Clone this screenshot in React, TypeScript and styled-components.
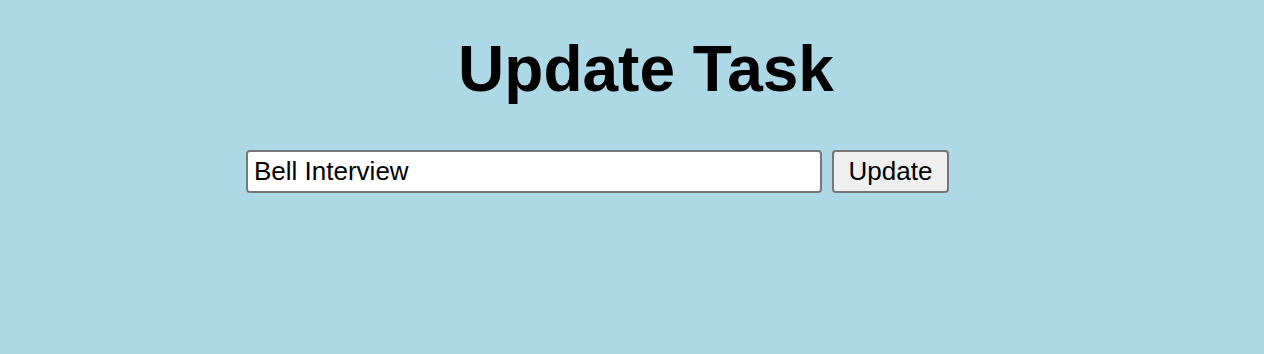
import { createGlobalStyle } from "styled-components";
import styled from "styled-components";

const GlobalStyle = createGlobalStyle`
  html, body {
    margin: 0;
    padding: 0;
    background-color: lightblue;
    font-family: "Liberation Sans", Arial, Helvetica, sans-serif;
  }
`;

const Page = styled.div`
  display: flex;
  flex-direction: column;
  min-height: 354px;
  background-color: lightblue;
`;

const Title = styled.h1`
  margin: 32px 0 0 0;
  padding-left: 28px;
  text-align: center;
  font-size: 64px;
  font-weight: 700;
  line-height: 74px;
  color: #000;
`;

const Form = styled.form`
  display: flex;
  align-items: flex-start;
  gap: 10px;
  margin: 44px 0 0 246px;
`;

const TaskInput = styled.input`
  box-sizing: border-box;
  width: 576px;
  height: 43px;
  padding: 1px 6px;
  border: 2px solid #767676;
  border-radius: 4px;
  background: #fff;
  font-family: "Liberation Sans", Arial, sans-serif;
  font-size: 26px;
  color: #000;
  outline: none;
`;

const SubmitButton = styled.button`
  box-sizing: border-box;
  width: 117px;
  height: 43px;
  padding: 0 8px;
  border: 2px solid #767676;
  border-radius: 4px;
  background: #efefef;
  font-family: "Liberation Sans", Arial, sans-serif;
  font-size: 26px;
  color: #000;
  cursor: pointer;
`;

export default function App() {
  return (
    <Page>
      <GlobalStyle />
      <Title>Update Task</Title>
      <Form onSubmit={(e) => e.preventDefault()}>
        <TaskInput type="text" defaultValue="Bell Interview" />
        <SubmitButton type="submit">Update</SubmitButton>
      </Form>
    </Page>
  );
}
